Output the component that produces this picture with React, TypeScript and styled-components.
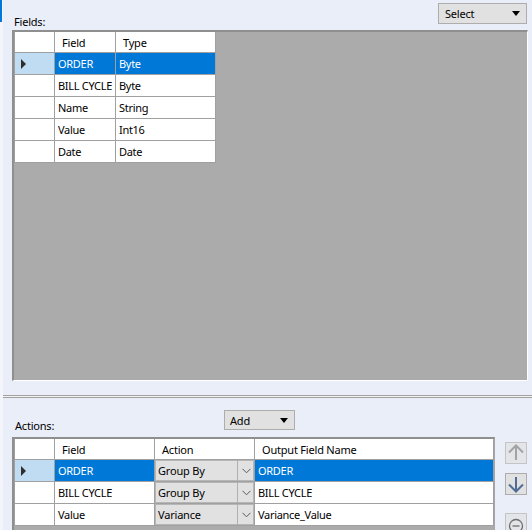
import styled, { createGlobalStyle } from "styled-components";

const GlobalStyle = createGlobalStyle`
  html, body {
    margin: 0;
    padding: 0;
  }
  body {
    font-family: "Noto Sans", "Open Sans", sans-serif;
    font-size: 11px;
    letter-spacing: -0.2px;
    color: #000;
  }
`;

const Page = styled.div`
  position: relative;
  width: 532px;
  height: 530px;
  overflow: hidden;
  box-sizing: border-box;
  padding: 0 4px 0 12px;
  background: #eaeef8;
  box-shadow: inset 3px 0 0 #f3f5fb;
  display: flex;
  flex-direction: column;

  &::before {
    content: "";
    position: absolute;
    left: 0;
    top: 0;
    width: 2px;
    height: 22px;
    background: #0078d7;
  }
`;

const TopRow = styled.div`
  display: flex;
  justify-content: space-between;
  align-items: flex-end;
  height: 30px;
  flex-shrink: 0;
`;

const Label = styled.span<{ $bottom: number; $left: number }>`
  line-height: 13px;
  margin-bottom: ${(p) => p.$bottom}px;
  margin-left: ${(p) => p.$left}px;
`;

const Dropdown = styled.div<{ $width: number; $height: number }>`
  align-self: flex-start;
  box-sizing: border-box;
  width: ${(p) => p.$width}px;
  height: ${(p) => p.$height}px;
  border: 1px solid #adadad;
  background: #e1e1e1;
  display: flex;
  align-items: center;
  justify-content: space-between;
  padding: 0 6px 0 6px;
  line-height: 13px;
`;

const Caret = styled.span`
  width: 0;
  height: 0;
  border-left: 4.5px solid transparent;
  border-right: 4.5px solid transparent;
  border-top: 5px solid #000;
`;

const SelectBox = styled(Dropdown)`
  margin-top: 3px;
  margin-right: 1px;
`;

const GridFrame = styled.div`
  box-sizing: border-box;
  border-style: solid;
  border-width: 2px 1px 1px 2px;
  border-color: #8f8f8f #ffffff #ffffff #8f8f8f;
  background: #ababab;
  overflow: hidden;
`;

const FieldsFrame = styled(GridFrame)`
  height: 351px;
  flex-shrink: 0;
`;

const Table = styled.div<{ $cols: string; $fill?: boolean }>`
  display: grid;
  grid-template-columns: ${(p) => p.$cols};
  grid-template-rows: 20px;
  grid-auto-rows: 21px;
  gap: 1px;
  padding: 0 1px 1px 1px;
  background: #a0a0a0;
  width: ${(p) => (p.$fill ? "auto" : "max-content")};
`;

type CellKind = "head" | "row" | "data";

const Cell = styled.div<{ $kind: CellKind; $selected?: boolean }>`
  display: flex;
  align-items: center;
  overflow: hidden;
  white-space: nowrap;
  box-sizing: border-box;
  padding-left: ${(p) => (p.$kind === "head" ? 7 : p.$kind === "data" ? 3 : 6)}px;
  letter-spacing: ${(p) => (p.$kind === "data" ? "-0.3px" : "inherit")};
  background: ${(p) =>
    p.$selected ? (p.$kind === "row" ? "#bfdcf3" : "#0078d7") : "#ffffff"};
  color: ${(p) => (p.$selected && p.$kind === "data" ? "#ffffff" : "#000000")};
`;

const Marker = styled.span`
  width: 0;
  height: 0;
  border-left: 5px solid #2e2e2e;
  border-top: 5px solid transparent;
  border-bottom: 5px solid transparent;
`;

const Combo = styled.div`
  display: flex;
  align-items: stretch;
  background: #e1e1e1;
  box-shadow: inset 0 0 0 1px #b6b6b6;
  overflow: hidden;
  white-space: nowrap;
`;

const ComboText = styled.span`
  flex: 1;
  display: flex;
  align-items: center;
  padding-left: 3px;
`;

const ComboButton = styled.span`
  width: 16px;
  border-left: 1px solid #b0b0b0;
  display: flex;
  align-items: center;
  justify-content: center;
`;

const Splitter = styled.div`
  flex-shrink: 0;
  margin: 14px -4px 0 -9px;
  height: 1px;
  border-top: 1px solid #a0a0a0;
  border-bottom: 1px solid #a0a0a0;
  background: #f4f4f4;
`;

const ActionsHeader = styled.div`
  display: grid;
  grid-template-columns: 212px auto;
  align-items: end;
  height: 27px;
  margin-top: 12px;
  flex-shrink: 0;
`;

const AddBox = styled(Dropdown)`
  align-self: start;
  padding: 0 6px 0 5px;
`;

const ActionsRow = styled.div`
  display: flex;
  align-items: flex-start;
  flex: 1;
`;

const ActionsFrame = styled(GridFrame)`
  width: 483px;
  height: 120px;
  border-right-color: #a6a6a6;
  flex-shrink: 0;
`;

const SideButtons = styled.div`
  display: flex;
  flex-direction: column;
  margin-left: 10px;
`;

const IconButton = styled.button<{ $top: number; $disabled?: boolean }>`
  box-sizing: border-box;
  width: 22px;
  height: 22px;
  margin-top: ${(p) => p.$top}px;
  padding: 0;
  border: 1px solid ${(p) => (p.$disabled ? "#c4c4c4" : "#adadad")};
  background: ${(p) => (p.$disabled ? "#e4e5e9" : "#e1e1e1")};
  display: flex;
  align-items: center;
  justify-content: center;
`;

const fields = [
  ["ORDER", "Byte"],
  ["BILL CYCLE", "Byte"],
  ["Name", "String"],
  ["Value", "Int16"],
  ["Date", "Date"],
];

const actions = [
  ["ORDER", "Group By", "ORDER"],
  ["BILL CYCLE", "Group By", "BILL CYCLE"],
  ["Value", "Variance", "Variance_Value"],
];

function Chevron() {
  return (
    <svg width="9" height="6" viewBox="0 0 9 6">
      <path d="M0.5 0.8 L4.5 4.8 L8.5 0.8" fill="none" stroke="#5a5a5a" strokeWidth="1" />
    </svg>
  );
}

function Arrow({ down, color }: { down?: boolean; color: string }) {
  return (
    <svg
      width="20"
      height="20"
      viewBox="0 0 20 20"
      style={down ? { transform: "rotate(180deg)" } : undefined}
    >
      <path
        d="M10 2.5 V17 M3 9.5 L10 2.5 L17 9.5"
        fill="none"
        stroke={color}
        strokeWidth="2"
      />
    </svg>
  );
}

function MinusCircle() {
  return (
    <svg width="20" height="20" viewBox="0 0 20 20" style={{ marginTop: 4 }}>
      <circle cx="10" cy="10" r="6.5" fill="none" stroke="#6e6e6e" strokeWidth="1.3" />
      <path d="M6.5 10 H13.5" stroke="#6e6e6e" strokeWidth="1.3" />
    </svg>
  );
}

export default function App() {
  return (
    <>
      <GlobalStyle />
      <Page>
        <TopRow>
          <Label $bottom={2} $left={2}>
            Fields:
          </Label>
          <SelectBox $width={89} $height={21}>
            <span>Select</span>
            <Caret />
          </SelectBox>
        </TopRow>

        <FieldsFrame>
          <Table $cols="39px 60px 99px">
            <Cell $kind="head" />
            <Cell $kind="head">Field</Cell>
            <Cell $kind="head">Type</Cell>
            {fields.map(([name, type], i) => (
              <>
                <Cell key={`r${i}`} $kind="row" $selected={i === 0}>
                  {i === 0 && <Marker />}
                </Cell>
                <Cell key={`f${i}`} $kind="data" $selected={i === 0}>
                  {name}
                </Cell>
                <Cell key={`t${i}`} $kind="data" $selected={i === 0}>
                  {type}
                </Cell>
              </>
            ))}
          </Table>
        </FieldsFrame>

        <Splitter />

        <ActionsHeader>
          <Label $bottom={5} $left={3}>
            Actions:
          </Label>
          <AddBox $width={71} $height={20}>
            <span>Add</span>
            <Caret />
          </AddBox>
        </ActionsHeader>

        <ActionsRow>
          <ActionsFrame>
            <Table $cols="39px 99px 99px 1fr" $fill>
              <Cell $kind="head" />
              <Cell $kind="head">Field</Cell>
              <Cell $kind="head">Action</Cell>
              <Cell $kind="head">Output Field Name</Cell>
              {actions.map(([field, action, output], i) => (
                <>
                  <Cell key={`r${i}`} $kind="row" $selected={i === 0}>
                    {i === 0 && <Marker />}
                  </Cell>
                  <Cell key={`f${i}`} $kind="data" $selected={i === 0}>
                    {field}
                  </Cell>
                  <Combo key={`a${i}`}>
                    <ComboText>{action}</ComboText>
                    <ComboButton>
                      <Chevron />
                    </ComboButton>
                  </Combo>
                  <Cell key={`o${i}`} $kind="data" $selected={i === 0}>
                    {output}
                  </Cell>
                </>
              ))}
            </Table>
          </ActionsFrame>
          <SideButtons>
            <IconButton $top={5} $disabled>
              <Arrow color="#a3a3a3" />
            </IconButton>
            <IconButton $top={9}>
              <Arrow down color="#4f6d96" />
            </IconButton>
            <IconButton $top={18} $disabled>
              <MinusCircle />
            </IconButton>
          </SideButtons>
        </ActionsRow>
      </Page>
    </>
  );
}
